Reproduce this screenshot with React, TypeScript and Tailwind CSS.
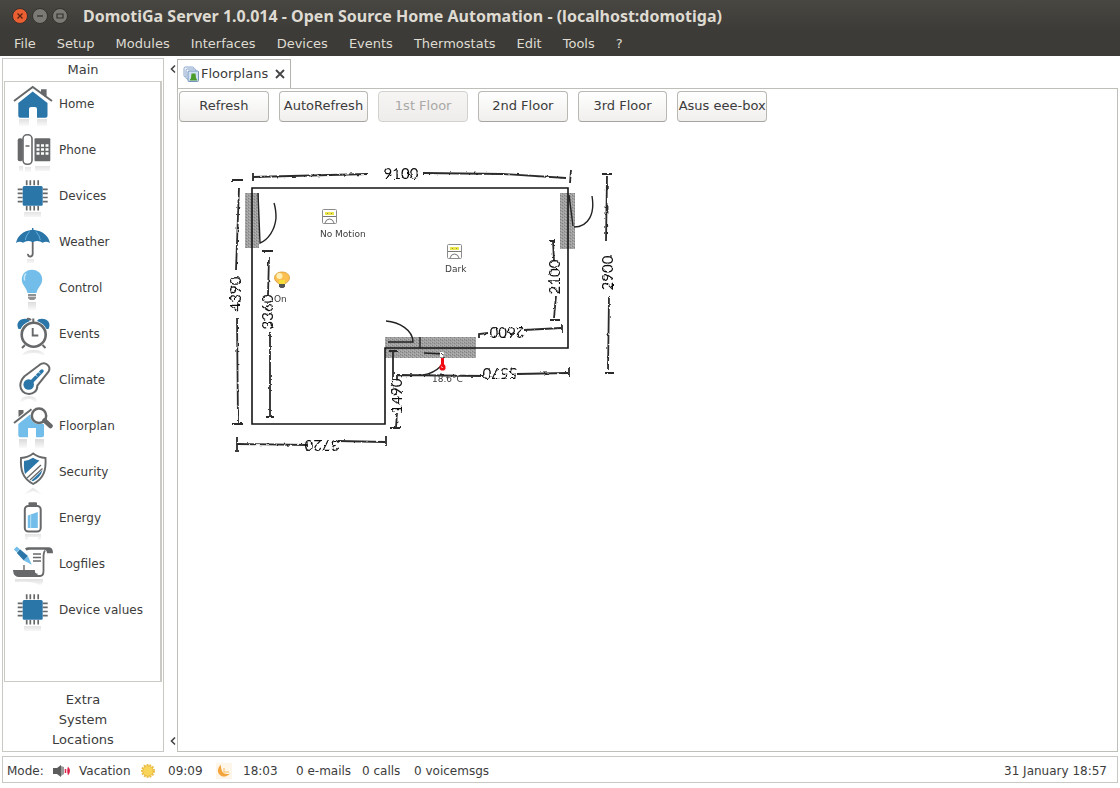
import { useState } from 'react'
import type { ReactNode } from 'react'

const menus = ['File', 'Setup', 'Modules', 'Interfaces', 'Devices', 'Events', 'Thermostats', 'Edit', 'Tools', '?']

const floors = ['Refresh', 'AutoRefresh', '1st Floor', '2nd Floor', '3rd Floor', 'Asus eee-box']

const BLUE = '#2a76a9'
const SKY = '#72bdea'
const GRAY = '#66686a'

function Shadow({ d }: { d: string }) {
  return <path d={d} fill="url(#fade)" />
}

function ChipIcon() {
  return (
    <>
      <path
        d="M13.7 7.3v5M17.3 7.3v5M21.2 7.3v5M25.2 7.3v5M13.7 33v4.5M17.3 33v4.5M21.2 33v4.5M25.2 33v4.5M4.7 16.3h5M4.7 20.3h5M4.7 24.5h5M4.7 28.7h5M29.7 16.3h5M29.7 20.3h5M29.7 24.5h5M29.7 28.7h5"
        stroke={GRAY}
        strokeWidth="1.7"
      />
      <rect x="9.7" y="13" width="20" height="19.7" rx="1.5" fill={BLUE} />
      <Shadow d="M11 39h17v5H11z" />
    </>
  )
}

const icons: Record<string, ReactNode> = {
  home: (
    <>
      <path d="M28 8.3h5.6v8.4L28 12.5z" fill={GRAY} />
      <path d="M1 20 19.7 6 39 20" fill="none" stroke={GRAY} strokeWidth="2" />
      <path d="M19.7 10.5 34.5 22v12.7q0 2-2 2H24V28q0-2-2-2h-4q-2 0-2 2v8.7H7.3q-2 0-2-2V22z" fill={BLUE} />
      <Shadow d="M6 38h10v7H6zM24 38h10v7H24z" />
    </>
  ),
  phone: (
    <>
      <rect x="4.7" y="11.3" width="5" height="23" rx="2" fill={GRAY} />
      <rect x="21.5" y="11.3" width="15.8" height="23" rx="1" fill={GRAY} />
      <rect x="10" y="7.8" width="9" height="29.5" rx="4" fill="#fff" stroke={GRAY} strokeWidth="1.6" />
      <path d="M12.5 19h4" stroke={GRAY} strokeWidth="1.5" />
      <path
        d="M23.5 18.5h3M28 18.5h3M32.5 18.5h3M23.5 22.5h3M28 22.5h3M32.5 22.5h3M23.5 26.5h3M28 26.5h3M32.5 26.5h3"
        stroke="#fff"
        strokeWidth="2.6"
      />
      <Shadow d="M6 39h4v5H6zM12 40h6v5h-6zM22 39h15v5H22z" />
    </>
  ),
  chip: <ChipIcon />,
  umbrella: (
    <>
      <path d="M19.7 22v12.5q0 3-2.4 3T15 34.9" fill="none" stroke={GRAY} strokeWidth="1.8" />
      <path
        d="M19 9h1.4v1.8C30 12 35.5 17 37 24q-4-2.5-7.3-.3Q25 20.5 19.7 23.2 14.5 20.5 10 23.7 6.5 21.5 3 24C4.5 17 10 12 19 10.8z"
        fill={BLUE}
      />
      <path d="M16.5 12.5Q12.5 17 12.3 21M23 12.5Q27 17 27.3 21" fill="none" stroke={SKY} strokeWidth=".8" />
      <Shadow d="M14 40h7v4h-7z" />
    </>
  ),
  bulb: (
    <>
      <path d="M19 4.8c6 0 10.2 4.3 10.2 9.8 0 5.5-4.7 8-5.7 13.4h-9c-1-5.4-5.7-7.9-5.7-13.4C8.8 9.1 13 4.8 19 4.8z" fill={SKY} />
      <path d="M13 8.5q-2.5 3-1.3 7" fill="none" stroke="#c4e6f9" strokeWidth="1.5" />
      <path d="M15 29h8v4.2L21 35h-4l-2-1.8z" fill="#8f9193" />
      <path d="M15 31.5h8" stroke="#d3d3d3" />
      <Shadow d="M15 37h8v8h-8z" />
    </>
  ),
  clock: (
    <>
      <path d="M5.5 18C2 11.5 8 6 15.5 8.3L17 10Q10 12.5 7.5 18zM35.5 18C39 11.5 33 6 25.5 8.3L24 10q7 2.5 9.5 8z" fill={BLUE} />
      <path d="M20.3 7.5v4M12 34l-3 3M29.5 34l3 3M14 8q2-1 4 1" fill="none" stroke={GRAY} strokeWidth="2" />
      <circle cx="20.7" cy="23.7" r="12" fill="#fff" stroke={GRAY} strokeWidth="2.6" />
      <path d="M19.7 17v7.5h5.6" fill="none" stroke={GRAY} strokeWidth="1.9" />
      <Shadow d="M9 44q3-5 11.7-5T32 44h-3q-3-2-8.3-2T12 44z" />
    </>
  ),
  thermometer: (
    <>
      <path
        d="M11.5 19.2 26.8 7.7c5.5-3.7 11.8 1.6 8.7 7L24.3 28.5c.2 5.5-4 8.5-8.3 8.5-5 0-8.7-3.8-8.7-8.5 0-4.3 2-7 4.2-9.3z"
        fill="#fff"
        stroke={GRAY}
        strokeWidth="2"
      />
      <circle cx="15.7" cy="27.5" r="5.3" fill={BLUE} />
      <path d="M17 26.5 29 14" stroke={BLUE} strokeWidth="3.5" strokeLinecap="round" />
      <path d="M22 17.5l2 2M25 14.5l2 2" stroke="#fff" />
      <Shadow d="M7 45q1-6 9-6t8 6h-3q-1-3-5-3t-6 3z" />
    </>
  ),
  floorplan: (
    <>
      <path d="M5.5 7h5v3l-5 4z" fill={GRAY} />
      <path d="M1 20 18.5 6.3" stroke={GRAY} strokeWidth="2" />
      <path d="M5.3 21 17 11.5l14 10v10.8q0 2-2 2h-6V25h-8v9.3H7.3q-2 0-2-2z" fill={SKY} />
      <circle cx="26" cy="12.7" r="8.6" fill="#fff" />
      <circle cx="26" cy="12.7" r="7.2" fill="#fff" stroke={GRAY} strokeWidth="2.5" />
      <path d="m31.5 17.5 6 5.5" stroke={GRAY} strokeWidth="4.5" strokeLinecap="round" />
      <Shadow d="M6 36h8v9H6zM22 36h9v9h-9z" />
    </>
  ),
  shield: (
    <>
      <path
        d="M20.2 4.5q5 4 12.3 4.5c.7 12-1.5 20.5-12.3 26C9.5 29.5 7.3 21 8 9q7.2-.5 12.2-4.5z"
        fill="#fff"
        stroke={GRAY}
        strokeWidth="1.9"
      />
      <path d="M11 12q5-.5 9-3.2 3 2 6.5 2.7L12 25q-1.500-5-1-13z" fill={BLUE} />
      <path d="M28 16 14 29M29.5 19.5 17 31" stroke={GRAY} strokeWidth="1.3" />
      <path d="M29.5 21q-2 7.5-9.5 11.3l-1.5-.8z" fill={BLUE} />
      <Shadow d="M11 45l9-6.5L29 45h-3l-6-3-6 3z" />
    </>
  ),
  battery: (
    <>
      <rect x="15.5" y="7.3" width="8.5" height="4" rx="1" fill={GRAY} />
      <rect x="11.8" y="11" width="15.9" height="25.5" rx="3.5" fill="#fff" stroke={GRAY} strokeWidth="2" />
      <path d="M14.8 20.5 24.8 17v16h-10z" fill={SKY} />
      <path d="M17.7 19.5V33" stroke="#b9e0f6" />
      <Shadow d="M12 39h16v6h-3v-3H15v3h-3z" />
    </>
  ),
  logfiles: (
    <>
      <path d="M12 7.5q1.5-1.2 3.5-1.2H36q4 0 4 6h-6q0-3.500-3-3.500H17q-2 0-3.500.7z" fill={GRAY} />
      <path d="M32 9.5q-1.700 2-1.500 9V30q0 5-3.500 5H5.500q-4 0-4.500-5h20q0 3.500 3.500 3.500" fill="none" stroke={GRAY} strokeWidth="1.8" />
      <path d="M1 30h20q.3 3 2.500 5h-18q-4 0-4.500-5z" fill={GRAY} />
      <path d="M11 24v6M20 13h8M20 16.5h8M20 20h8" stroke={GRAY} strokeWidth="1.4" />
      <path d="m.8 8.5 3-3 3 2.700-3 3.100z" fill={SKY} />
      <path d="M7 8.3 15 15l-4.200 4.500L3.800 12z" fill={BLUE} />
      <path d="m15 15.3 3.800 8.500-8-4.200z" fill={SKY} />
      <Shadow d="M2 38h28v3q-1 3-4 3-5-4-24-3z" />
    </>
  )
}

const items = [
  { label: 'Home', icon: 'home' },
  { label: 'Phone', icon: 'phone' },
  { label: 'Devices', icon: 'chip' },
  { label: 'Weather', icon: 'umbrella' },
  { label: 'Control', icon: 'bulb' },
  { label: 'Events', icon: 'clock' },
  { label: 'Climate', icon: 'thermometer' },
  { label: 'Floorplan', icon: 'floorplan' },
  { label: 'Security', icon: 'shield' },
  { label: 'Energy', icon: 'battery' },
  { label: 'Logfiles', icon: 'logfiles' },
  { label: 'Device values', icon: 'chip' }
]

// Dimension labels as written on the plan, turned to follow their line
const dimensions = [
  { text: '9100', x: 401, y: 174, turn: 0 },
  { text: '4390', x: 236, y: 294, turn: -90 },
  { text: '3360', x: 268, y: 312, turn: -90 },
  { text: '2100', x: 555, y: 277, turn: -90 },
  { text: '2900', x: 608, y: 273, turn: -90 },
  { text: '1490', x: 397, y: 396, turn: -90 },
  { text: '2600', x: 507, y: 332, turn: 180 },
  { text: '5570', x: 500, y: 373, turn: 180 },
  { text: '3720', x: 322, y: 445, turn: 180 }
]

function FloorDrawing() {
  return (
    <svg viewBox="220 155 420 310" className="block h-[310px] w-[420px]" aria-label="1st Floor plan">
      <defs>
        <pattern id="hatch" width="4" height="3" patternUnits="userSpaceOnUse">
          <rect width="4" height="3" fill="#a0a0a0" />
          <path d="M0 0h1v1H0zM2 1h1v1H2z" fill="#828282" />
          <path d="M1 2h1v1H1zM3 0h1v1H3z" fill="#b4b4b4" />
        </pattern>
        <filter id="rough" filterUnits="userSpaceOnUse" x="220" y="155" width="420" height="310">
          <feTurbulence type="fractalNoise" baseFrequency="0.3" numOctaves="1" seed="4" />
          <feDisplacementMap in="SourceGraphic" scale="3" xChannelSelector="R" yChannelSelector="G" />
        </filter>
      </defs>
      <path d="M245 193h14v55h-14zM560 193h15v56h-15zM385 337h91v21h-91z" fill="url(#hatch)" />
      <path d="M252 188h316v160H385v76H252z" fill="none" stroke="#141414" strokeWidth="1.6" />
      <path
        d="M258 193l2 50c8-3 15-13 16-25q0-9-2-15M569 195l4 31M574 227c15 0 21-14 18-31M388 342h25c0-12-14-20-27-21M420 337v11M424 353l20 1v4M423 375c7-1 14-5 18-9"
        fill="none"
        stroke="#222"
        strokeWidth="1.4"
      />
      <path
        d="M253 173v9M253 177l115-3M423 173l80 1 63 4M571 170l-1 13M232 180h11M239 188l-3 82M237 318l1 105M232 424h11M262 251h11M269 257l-1 38M270 332v84M266 417h9M549 241h6M553 241l1 20M556 296l-2 22M550 320h10M602 174h10M607 176l-1 65M609 296l-1 74M605 373h9M479 338v-4l9-1M524 330l37-2M562 324v9M397 379v-4l86 1M517 374l51-1M569 367v10M389 351h9M393 352v29M397 413l-1 14M390 428h11M237 437v15M238 444l70 1M338 441l47 1M386 436v10"
        fill="none"
        stroke="#2a2a2a"
        strokeWidth="1.8"
        filter="url(#rough)"
      />
      <g fill="#111" fontFamily="Lato, 'Noto Sans', sans-serif" fontSize="15" textAnchor="middle" filter="url(#rough)">
        {dimensions.map((d) => (
          <text key={d.text} transform={`translate(${d.x} ${d.y}) rotate(${d.turn})`} y="5">
            {d.text}
          </text>
        ))}
      </g>
    </svg>
  )
}

function SensorIcon() {
  return (
    <svg viewBox="0 0 16 16" className="block size-4">
      <rect x="0.5" y="1.5" width="14" height="14" rx="1" fill="#fff" stroke="#8c8c8c" />
      <path d="M1 8.5h13M3 15q1-4 4.500-4t4.500 4" fill="none" stroke="#777" />
      <path d="M3 5.5h9" stroke="#ece54a" strokeWidth="3" />
      <path d="M5 5.5h1M9 5.5h1" stroke="#8a8a4a" />
    </svg>
  )
}

function LampIcon() {
  return (
    <svg viewBox="0 0 16 18" className="block h-[18px] w-4">
      <path d="M8 1c4.500 0 7.500 2.500 7.500 6 0 2.500-2 4-4 5.500H4.500C2.500 11 .5 9.500.5 7 .5 3.500 3.500 1 8 1z" fill="#fbc04f" stroke="#d99a3c" strokeWidth=".8" />
      <circle cx="5.5" cy="5" r="3" fill="#fff0b8" />
      <path d="M5 9h6v4H5z" fill="#f6df3b" />
      <path d="M5 13h6v2.500L9.500 17h-3L5 15.500z" fill="#555" />
    </svg>
  )
}

function HotIcon() {
  return (
    <svg viewBox="0 0 8 20" className="block h-5 w-2">
      <path d="M2 1h3l2 2v3H2z" fill="#fff" />
      <path d="M3 2l2 2M6 3v4" stroke="#555" />
      <path d="M3 7h3v6l1.500 2v3L6 19.500H3L1.500 18v-3L3 13z" fill="#f00a14" />
      <path d="M3.500 15.500l1 1.500" stroke="#fff" />
    </svg>
  )
}

function TitleBar() {
  return (
    <div className="flex h-[31px] items-center bg-linear-to-b from-[#484742] to-[#3c3b37] pl-3">
      <div className="flex gap-1">
        <button aria-label="Close" className="grid size-4 place-items-center rounded-full border border-[#39302c] bg-[#ec5f33]">
          <svg viewBox="0 0 10 10" className="size-[10px]">
            <path d="M2.5 2.5l5 5M7.5 2.5l-5 5" stroke="#5a2412" strokeWidth="1.3" />
          </svg>
        </button>
        <button aria-label="Minimize" className="grid size-4 place-items-center rounded-full border border-[#33322e] bg-[#7b7a74]">
          <svg viewBox="0 0 10 10" className="size-[10px]">
            <path d="M2 5h6" stroke="#33322e" strokeWidth="1.3" />
          </svg>
        </button>
        <button aria-label="Maximize" className="grid size-4 place-items-center rounded-full border border-[#33322e] bg-[#7b7a74]">
          <svg viewBox="0 0 10 10" className="size-[10px]">
            <path d="M2 3h6v4H2z" fill="none" stroke="#33322e" strokeWidth="1.2" />
          </svg>
        </button>
      </div>
      <h1 className="ml-[15px] font-['Noto_Sans',sans-serif] text-[16px] leading-5 font-bold whitespace-nowrap text-[#dfdbd2]">
        DomotiGa Server 1.0.014 - Open Source Home Automation - (localhost:domotiga)
      </h1>
    </div>
  )
}

function Chevron() {
  return (
    <svg viewBox="0 0 8 10" className="h-[10px] w-2">
      <path d="M6 1.5 2.5 5 6 8.5" fill="none" stroke="#444" strokeWidth="1.6" />
    </svg>
  )
}

function Sidebar() {
  return (
    <aside className="mt-0.5 ml-0.5 flex w-[162px] shrink-0 flex-col border border-[#c9c8c2] px-px">
      <button className="h-[22px] shrink-0 text-[13px]">Main</button>
      <nav className="flex-1 overflow-hidden border border-r-2 border-[#cbcac4] pl-2">
        {items.map((item) => (
          <button key={item.label} className="flex h-[46px] -translate-y-px items-center gap-1.5">
            <svg viewBox="0 0 40 46" className="h-[46px] w-10 shrink-0">
              {icons[item.icon]}
            </svg>
            <span className="text-[12px] whitespace-nowrap">{item.label}</span>
          </button>
        ))}
      </nav>
      <div className="flex shrink-0 flex-col pt-2 pb-px text-[13px] leading-5">
        <button>Extra</button>
        <button>System</button>
        <button>Locations</button>
      </div>
    </aside>
  )
}

function StatusBar() {
  return (
    <footer className="mx-0.5 mt-1 mb-[5px] flex h-[27px] shrink-0 items-center border border-[#c9c8c2] pt-0.5 pr-2.5 pl-1 text-[12px] whitespace-nowrap">
      <span className="w-[46px]">Mode:</span>
      <svg viewBox="0 0 18 12" className="mr-2 h-3 w-[18px]">
        <path d="M0 3h4l4-3v12L4 9H0z" fill="#5c5c5c" />
        <path d="M8 1l3 1v7l-3 2z" fill="#999" />
        <path d="M12.5 4v4" stroke="#e0224a" strokeWidth="1.5" />
        <path d="M15 1.5q4 4.500 0 9-1.500-4.500 0-9z" fill="#e0224a" />
      </svg>
      <span className="w-[61px]">Vacation</span>
      <svg viewBox="0 0 16 16" className="mr-3 size-4">
        <circle cx="8" cy="8" r="6" fill="none" stroke="#ecc04c" strokeWidth="2" strokeDasharray="1.8 1.1" />
        <circle cx="8" cy="8" r="5.3" fill="#f8d458" stroke="#e6b43a" strokeWidth=".8" />
      </svg>
      <span className="w-12">09:09</span>
      <svg viewBox="0 0 16 16" className="mr-[11px] size-4">
        <rect width="16" height="16" fill="#fff6ea" />
        <path d="M5 2c-3 2-4 6-2 9s7 4 11-.5C10 12 7 10.500 6 8s-1-4-1-6z" fill="#f3a43a" />
        <path d="M8 5v4h5" fill="none" stroke="#f8cf86" strokeWidth="1.5" />
      </svg>
      <span className="w-[53px]">18:03</span>
      <span className="w-[66px]">0 e-mails</span>
      <span className="w-[52px]">0 calls</span>
      <span>0 voicemsgs</span>
      <span className="ml-auto">31 January 18:57</span>
    </footer>
  )
}

export default function App() {
  const [floor, setFloor] = useState('1st Floor')

  return (
    <div className="flex h-screen min-h-[780px] flex-col bg-white font-['DejaVu_Sans',sans-serif] text-[#3c3c3c]">
      <svg className="absolute size-0" aria-hidden="true">
        <linearGradient id="fade" gradientUnits="userSpaceOnUse" x1="0" y1="37" x2="0" y2="45">
          <stop offset="0" stopColor="#dcdcdc" />
          <stop offset="1" stopColor="#fafafa" />
        </linearGradient>
      </svg>

      <header className="shrink-0 bg-[#3c3b37]">
        <TitleBar />
        <nav className="flex h-[25px] items-center gap-[21px] pl-3.5 text-[13px] text-[#dfdbd2]">
          {menus.map((menu) => (
            <button key={menu}>{menu}</button>
          ))}
        </nav>
      </header>

      <div className="flex min-h-0 flex-1">
        <Sidebar />
        <div className="flex w-[13px] shrink-0 flex-col items-end justify-between pt-2 pb-1.5">
          <button aria-label="Collapse sidebar"><Chevron /></button>
          <button aria-label="Collapse panel"><Chevron /></button>
        </div>

        <main className="mr-0.5 flex min-w-0 flex-1 flex-col">
          <div className="flex pt-[3px]">
            <div className="flex h-[29px] items-center border border-b-0 border-[#b4b3ae] pr-1 pl-[5px] text-[13px]">
              <svg viewBox="0 0 16 16" className="mr-0.5 size-4">
                <rect x="1" y="1" width="10" height="10" rx="1.5" fill="#eef3fa" stroke="#8aa6cc" />
                <rect x="3" y="3" width="10" height="10" rx="1.5" fill="#eef3fa" stroke="#8aa6cc" />
                <rect x="5" y="5" width="10.5" height="10.5" rx="1" fill="#cfe0f4" stroke="#7593bd" />
                <path d="M6.5 14.5 8 12l.5-4.500h4L13 12l1.500 2.500z" fill="#4b9a2c" />
              </svg>
              Floorplans
              <button aria-label="Close tab" className="ml-1.5">
                <svg viewBox="0 0 12 12" className="size-3">
                  <path d="M2 2l8 8M10 2l-8 8" stroke="#444" strokeWidth="1.8" />
                </svg>
              </button>
            </div>
          </div>

          <section className="flex-1 overflow-hidden border border-[#bfbeb9] px-px pt-0.5">
            <div className="grid w-[588px] grid-cols-6 gap-2.5">
              {floors.map((name) => (
                <button
                  key={name}
                  disabled={name === floor}
                  onClick={() => name.endsWith('Floor') && setFloor(name)}
                  className="flex h-[31px] items-center justify-center rounded-[4px] border border-[#b9b8b3] border-b-[#a5a49f] bg-linear-to-b from-white to-[#f0efed] pb-0.5 text-[13px] whitespace-nowrap disabled:border-[#d2d1cd] disabled:from-[#f6f5f4] disabled:to-[#eeedec] disabled:text-[#a9a8a5]"
                >
                  {name}
                </button>
              ))}
            </div>

            <div className="relative mt-[33px] ml-[41px] w-[420px] text-[9px] leading-3">
              <FloorDrawing />
              <div className="absolute top-[53px] left-[100px] whitespace-nowrap">
                <div className="mb-1 ml-0.5"><SensorIcon /></div>
                No Motion
              </div>
              <div className="absolute top-[88px] left-[225px]">
                <div className="mb-1 ml-0.5"><SensorIcon /></div>
                Dark
              </div>
              <div className="absolute top-[116px] left-[54px]">
                <div className="mb-1"><LampIcon /></div>
                On
              </div>
              <div className="absolute top-[196px] left-[212px] whitespace-nowrap">
                <div className="mb-0.5 ml-1.5"><HotIcon /></div>
                18.6°C
              </div>
            </div>
          </section>
        </main>
      </div>

      <StatusBar />
    </div>
  )
}
